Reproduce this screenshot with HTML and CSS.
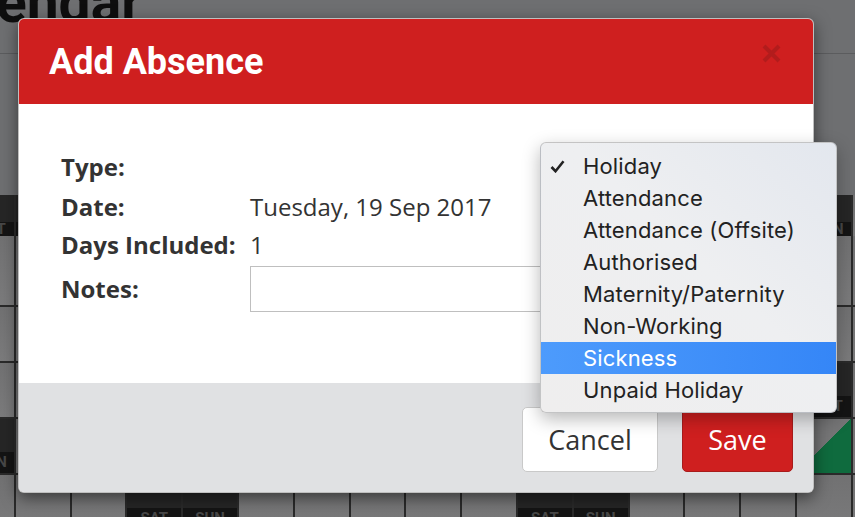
FILE: index.html
```html
<!DOCTYPE html>
<html lang="en">
<head>
<meta charset="utf-8">
<title>Calendar – Add Absence</title>
<link rel="stylesheet" href="styles.css">
</head>
<body>
<div class="page">
  <h1 class="page-title">Calendar</h1>
  <div class="rule"></div>
  <div class="calendar">
    <div class="cal-row row-a">
      <div class="cell wk"><span class="lbl">SAT</span></div><div class="cell wk"><span class="lbl"></span></div>
      <div class="cell"></div><div class="cell"></div><div class="cell"></div><div class="cell"></div><div class="cell"></div>
      <div class="cell wk"><span class="lbl"></span></div><div class="cell wk"><span class="lbl"></span></div>
      <div class="cell"></div><div class="cell"></div><div class="cell"></div><div class="cell"></div><div class="cell"></div>
      <div class="cell wk"><span class="lbl"></span></div><div class="cell wk"><span class="lbl">SUN</span></div>
      <div class="cell"></div>
    </div>
    <div class="cal-row row-b">
      <div class="cell"></div><div class="cell"></div><div class="cell"></div><div class="cell"></div><div class="cell"></div><div class="cell"></div><div class="cell"></div><div class="cell"></div><div class="cell"></div><div class="cell"></div><div class="cell"></div><div class="cell"></div><div class="cell"></div><div class="cell"></div><div class="cell"></div><div class="cell"></div><div class="cell"></div>
    </div>
    <div class="cal-row row-c">
      <div class="cell"></div><div class="cell"></div><div class="cell"></div><div class="cell"></div><div class="cell"></div><div class="cell"></div><div class="cell"></div><div class="cell"></div><div class="cell"></div><div class="cell"></div><div class="cell"></div><div class="cell"></div><div class="cell"></div><div class="cell"></div><div class="cell"></div><div class="cell"></div><div class="cell"></div>
    </div>
    <div class="cal-row row-d">
      <div class="cell"></div><div class="cell"></div><div class="cell"></div><div class="cell"></div><div class="cell"></div><div class="cell"></div><div class="cell"></div><div class="cell"></div><div class="cell"></div><div class="cell"></div><div class="cell"></div><div class="cell"></div><div class="cell"></div><div class="cell"></div>
      <div class="cell wk"><span class="lbl"></span></div><div class="cell wk"><span class="lbl">SAT</span></div>
      <div class="cell"></div>
    </div>
    <div class="cal-row row-e">
      <div class="cell wk"><span class="lbl">SUN</span></div>
      <div class="cell"></div><div class="cell"></div><div class="cell"></div><div class="cell"></div><div class="cell"></div><div class="cell"></div><div class="cell"></div><div class="cell"></div><div class="cell"></div><div class="cell"></div><div class="cell"></div><div class="cell"></div><div class="cell"></div><div class="cell"></div>
      <div class="cell half-day"></div>
      <div class="cell"></div>
    </div>
    <div class="cal-row row-f">
      <div class="cell"></div><div class="cell"></div><div class="cell"></div>
      <div class="cell wk"><span class="lbl">SAT</span></div><div class="cell wk"><span class="lbl">SUN</span></div>
      <div class="cell"></div><div class="cell"></div><div class="cell"></div><div class="cell"></div><div class="cell"></div>
      <div class="cell wk"><span class="lbl">SAT</span></div><div class="cell wk"><span class="lbl">SUN</span></div>
      <div class="cell"></div><div class="cell"></div><div class="cell"></div><div class="cell"></div><div class="cell"></div>
    </div>
  </div>
</div>

<div class="modal">
  <div class="modal-header">
    <h2 class="modal-title">Add Absence</h2>
    <span class="close" aria-label="Close">
      <svg width="19" height="19" viewBox="0 0 19 19"><path d="M2 2 L17 17 M17 2 L2 17" stroke="#b21c1c" stroke-width="4" stroke-linecap="butt"/></svg>
    </span>
  </div>
  <div class="modal-body">
    <div class="form-row r-type"><div class="label">Type:</div><div class="value"></div></div>
    <div class="form-row r-date"><div class="label">Date:</div><div class="value">Tuesday, 19 Sep 2017</div></div>
    <div class="form-row r-days"><div class="label">Days Included:</div><div class="value">1</div></div>
    <div class="form-row r-notes"><div class="label">Notes:</div><div class="value"><div class="notes-input"></div></div></div>
  </div>
  <div class="modal-footer">
    <button class="btn btn-cancel">Cancel</button>
    <button class="btn btn-save">Save</button>
  </div>
</div>

<div class="menu">
  <div class="menu-item"><span class="check"><svg width="15" height="13" viewBox="0 0 15 13"><path d="M1.5 7 L5.5 11.2 L13.5 1.2" fill="none" stroke="#222" stroke-width="2.6"/></svg></span>Holiday</div>
  <div class="menu-item"><span class="check"></span>Attendance</div>
  <div class="menu-item"><span class="check"></span>Attendance (Offsite)</div>
  <div class="menu-item"><span class="check"></span>Authorised</div>
  <div class="menu-item"><span class="check"></span>Maternity/Paternity</div>
  <div class="menu-item"><span class="check"></span>Non-Working</div>
  <div class="menu-item active"><span class="check"></span>Sickness</div>
  <div class="menu-item"><span class="check"></span>Unpaid Holiday</div>
</div>
</body>
</html>
```

FILE: styles.css
```css
* { box-sizing: border-box; }

html, body {
  margin: 0;
  padding: 0;
}

body {
  width: 855px;
  height: 517px;
  overflow: hidden;
  background: #6e6f71;
  font-family: "Open Sans", "Liberation Sans", sans-serif;
  position: relative;
}

/* ---------- background page ---------- */
.page-title {
  margin: -26px 0 0 -87px;
  font: 700 57px/57px Roboto, "Liberation Sans", sans-serif;
  color: #0e0e0e;
  white-space: nowrap;
}

.rule {
  margin-top: 22px;
  height: 1px;
  background: #5b5c5e;
}

.calendar {
  margin-top: 141px;
  margin-left: -40px;
}

.cal-row {
  display: grid;
  grid-template-columns: repeat(17, 55.8px);
  border-bottom: 2px solid #2a2a2a;
}

.row-a { height: 41px; border-bottom: none; }
.row-b { height: 71px; }
.row-c { height: 56px; }
.row-d { height: 56px; }
.row-e { height: 56px; }
.row-f { height: 60px; border-bottom: none; }

.cell {
  background: linear-gradient(#717172, #7b7b7c);
  border-right: 2px solid #2a2a2a;
}

.cell.wk {
  background: #262626;
  display: flex;
  flex-direction: column;
  justify-content: flex-end;
}

.row-f .cell.wk { justify-content: flex-start; padding-top: 33px; }

.lbl {
  display: block;
  height: 21px;
  padding-left: 10px;
  background: #141414;
  color: #474747;
  font: 700 15px/21px Roboto, "Liberation Sans", sans-serif;
  text-align: center;
}

.row-f .lbl { padding-left: 0; }
.row-a .lbl { height: 14px; line-height: 14px; }

.cell.half-day {
  background: linear-gradient(to bottom right, #757576 50%, #0f6b3e 50%);
}

/* ---------- modal ---------- */
.modal {
  position: absolute;
  left: 18px;
  top: 18px;
  width: 796px;
  height: 475px;
  border-radius: 6px;
  overflow: hidden;
  background: #fff;
  border: 1px solid rgba(0, 0, 0, 0.25);
  box-shadow: 0 5px 16px rgba(0, 0, 0, 0.5);
}

.modal-header {
  height: 85px;
  background: #cf1f1f;
  display: flex;
  align-items: center;
  justify-content: space-between;
  padding: 0 32px 0 30px;
}

.modal-title {
  margin: 0;
  font: 700 36px/40px Roboto, "Liberation Sans", sans-serif;
  color: #fff;
}

.close {
  display: flex;
  margin-top: -16px;
}

.modal-body {
  height: 279px;
  padding: 44px 30px 0 42px;
  background: #fff;
}

.form-row {
  display: flex;
  align-items: center;
  font-size: 24px;
  line-height: 38px;
  color: #333;
}

.r-type { height: 38px; margin-bottom: 2px; }
.r-date { height: 38px; }
.r-days { height: 38px; margin-bottom: 2px; }
.r-notes { height: 46px; }

.label {
  width: 189px;
  font-weight: 700;
  flex: none;
}

.value {
  flex: 1;
  font-weight: 400;
}

.notes-input {
  height: 46px;
  border: 1px solid #bfbfbf;
  background: #fff;
}

.modal-footer {
  height: 109px;
  background: #e0e1e3;
  display: flex;
  justify-content: flex-end;
  align-items: flex-start;
  gap: 24px;
  padding: 24px 20px 0 0;
}

.btn {
  height: 65px;
  padding: 0 25px;
  border-radius: 5px;
  font: 400 27px/1 "Open Sans", "Liberation Sans", sans-serif;
  border: 1px solid #c9c9c9;
}

.btn-cancel {
  width: 136px;
  background: #fff;
  color: #333;
}

.btn-save {
  width: 111px;
  background: #cf1f1f;
  border-color: #a81b1b;
  color: #fff;
}

/* ---------- native select popup ---------- */
.menu {
  position: absolute;
  left: 540px;
  top: 142px;
  width: 297px;
  height: 271px;
  padding: 7px 0 7px;
  border-radius: 6px;
  border: 1px solid rgba(0, 0, 0, 0.18);
  background: linear-gradient(to bottom left, #e3e7ee 0%, #eeeff1 45%, #efeeee 100%);
  box-shadow: 0 6px 18px rgba(0, 0, 0, 0.28);
  font-family: Inter, "DejaVu Sans", sans-serif;
}

.menu-item {
  display: flex;
  align-items: center;
  height: 32px;
  padding-left: 9px;
  font-size: 22px;
  letter-spacing: 0.15px;
  color: #222;
  white-space: nowrap;
}

.check {
  width: 33px;
  flex: none;
  display: flex;
  align-items: center;
}

.menu-item.active {
  background: linear-gradient(to right, #4d9bfc, #3586f7);
  color: #fff;
}
```
